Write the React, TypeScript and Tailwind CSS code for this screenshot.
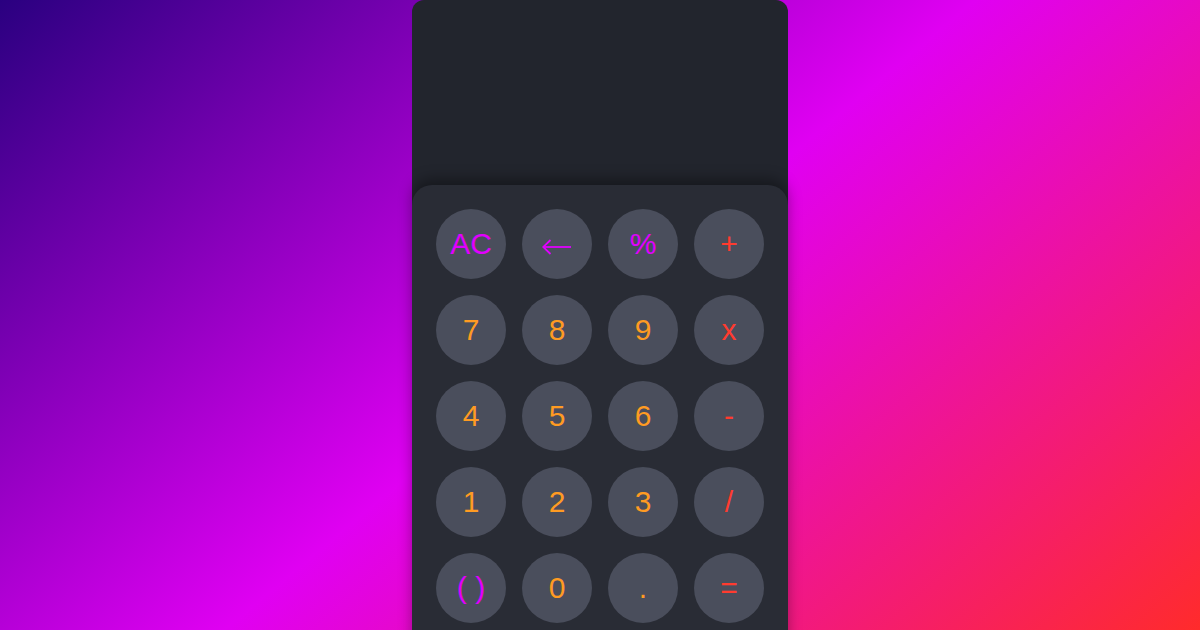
import React from "react";

type K = { label: React.ReactNode; color: string };

const O = "text-[#ff9b22]";
const M = "text-[#e100ff]";
const R = "text-[#ff3b2f]";

const Arrow = () => (
  <svg width="30" height="16" viewBox="0 0 30 16" className="mt-[6px]" fill="none" stroke="currentColor" strokeWidth="1.8" strokeLinecap="butt">
    <path d="M1 8 H29" />
    <path d="M8.5 1 L1.2 8 L8.5 15" />
  </svg>
);

const keys: K[] = [
  { label: "AC", color: M },
  { label: <Arrow />, color: M },
  { label: "%", color: M },
  { label: "+", color: R },
  { label: "7", color: O },
  { label: "8", color: O },
  { label: "9", color: O },
  { label: "x", color: R },
  { label: "4", color: O },
  { label: "5", color: O },
  { label: "6", color: O },
  { label: "-", color: R },
  { label: "1", color: O },
  { label: "2", color: O },
  { label: "3", color: O },
  { label: "/", color: R },
  { label: "( )", color: M },
  { label: "0", color: O },
  { label: ".", color: O },
  { label: "=", color: R },
];

export default function App() {
  return (
    <div
      className="w-[1200px] h-[630px] overflow-hidden flex justify-center bg-[linear-gradient(140deg,#2a0080_0%,#e000f2_50%,#ff2b2b_100%)]"
      style={{ fontFamily: '"Liberation Sans", Arial, sans-serif' }}
    >
      <div className="w-[376px] shrink-0 flex flex-col rounded-t-[12px] bg-[#22252d] h-[660px]">
        <div className="h-[185px] shrink-0" />
        <div className="flex-1 rounded-t-[20px] bg-[#292c35] shadow-[0_-6px_14px_rgba(0,0,0,0.35)] px-[24px] pt-[24px] pb-[24px]">
          <div className="grid grid-cols-4 gap-[16px]">
            {keys.map((k, i) => (
              <div
                key={i}
                className={`w-[70px] h-[70px] rounded-full bg-[#4a4e5c] flex items-center justify-center text-[30px] leading-none ${k.color}`}
              >
                {k.label}
              </div>
            ))}
          </div>
        </div>
      </div>
    </div>
  );
}
